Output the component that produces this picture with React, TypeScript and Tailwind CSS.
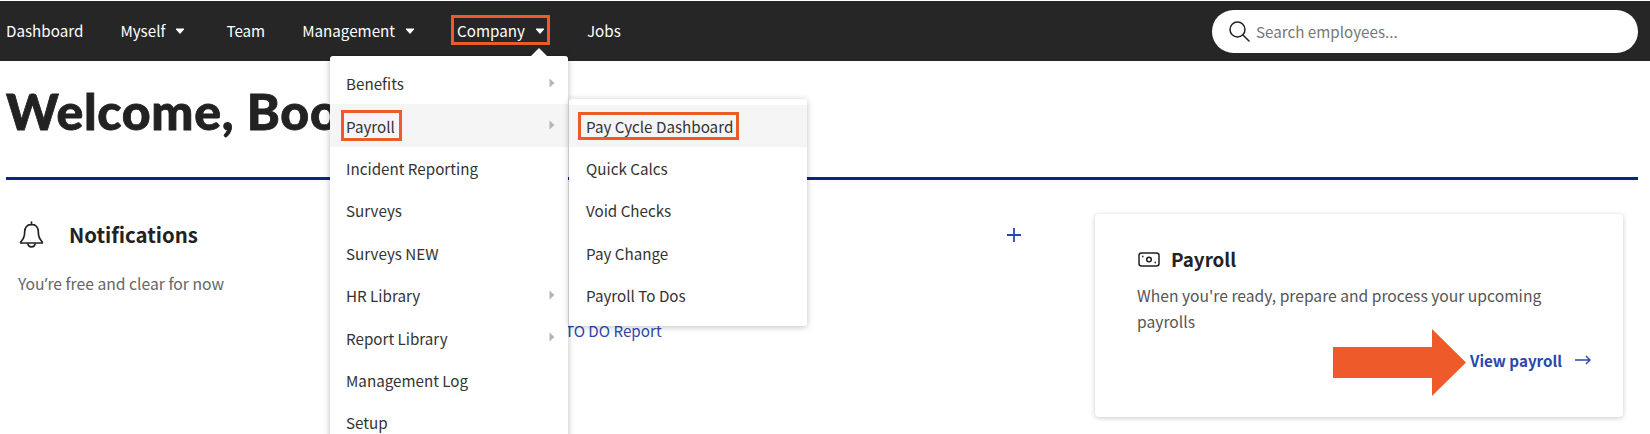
const menuItems = [
  { label: "Benefits", arrow: true },
  { label: "Payroll", arrow: true, active: true },
  { label: "Incident Reporting" },
  { label: "Surveys" },
  { label: "Surveys NEW" },
  { label: "HR Library", arrow: true },
  { label: "Report Library", arrow: true },
  { label: "Management Log" },
  { label: "Setup" },
];

const subItems = ["Pay Cycle Dashboard", "Quick Calcs", "Void Checks", "Pay Change", "Payroll To Dos"];

function Caret() {
  return (
    <svg width="10" height="6" viewBox="0 0 10 6" className="ml-[10px] mt-[1px]">
      <path d="M1 1h8L5 5.400z" fill="#fff" stroke="#fff" strokeWidth="1" strokeLinejoin="round" />
    </svg>
  );
}

function SideArrow() {
  return (
    <svg width="6" height="10" viewBox="0 0 6 10" className="absolute left-[219px] top-[16px]">
      <path d="M0.5 0.500L5.500 5L0.500 9.500z" fill="#b5b5b5" />
    </svg>
  );
}

function SearchIcon() {
  return (
    <svg width="22" height="22" viewBox="0 0 22 22" fill="none" stroke="#222" strokeWidth="1.500" strokeLinecap="round" className="mr-[6px]">
      <circle cx="9.500" cy="9.500" r="7.500" />
      <path d="M15 15l6 6" />
    </svg>
  );
}

function BellIcon() {
  return (
    <svg width="25" height="27" viewBox="0 0 25 27" fill="none" stroke="#222" strokeWidth="1.700" strokeLinejoin="round">
      <path d="M12.500 1v2.400" strokeLinecap="round" />
      <path d="M12.500 3.400c-4.400 0-6.800 3.200-6.800 7.400 0 5-1.200 7.600-4 10.200v1h21.600v-1c-2.800-2.600-4-5.200-4-10.200 0-4.200-2.400-7.400-6.800-7.400z" />
      <path d="M8.800 22.300c.3 2.200 1.800 3.500 3.700 3.500s3.400-1.300 3.700-3.500" />
    </svg>
  );
}

function MoneyIcon() {
  return (
    <svg width="22" height="15" viewBox="0 0 22 15" fill="none" stroke="#222" strokeWidth="1.500" strokeLinecap="round">
      <rect x="1" y="1" width="20" height="13" rx="2.500" />
      <circle cx="11" cy="7.500" r="2.300" />
      <path d="M4.800 4.200v.6M17.200 10.200v.6" />
    </svg>
  );
}

function LongArrow() {
  return (
    <svg width="16" height="10" viewBox="0 0 16 10" fill="none" stroke="#2a47ad" strokeWidth="1.400" className="ml-[13px]">
      <path d="M0 5h15M11 1l4 4-4 4" />
    </svg>
  );
}

function PlusIcon() {
  return (
    <svg width="14" height="14" viewBox="0 0 14 14" stroke="#2a47ad" strokeWidth="1.800" className="absolute left-[680px] top-[14px]">
      <path d="M7 0v14M0 7h14" />
    </svg>
  );
}

export default function App() {
  return (
    <div className="relative h-[434px] w-[1650px] overflow-hidden bg-white font-['Noto_Sans_CJK_SC','Noto_Sans',sans-serif] text-[15.200px] leading-[24px] text-[#333]">
      {/* top bar */}
      <header className="mt-[1px] flex h-[60px] items-center justify-between bg-[#262626] pl-[6px] pr-[12px] text-white">
        <nav className="flex items-center pb-[2px]">
          <a className="mr-[37px]">Dashboard</a>
          <a className="mr-[41px] flex items-center">Myself<Caret /></a>
          <a className="mr-[37px]">Team</a>
          <a className="mr-[36px] flex items-center">Management<Caret /></a>
          <a className="mr-[37px] flex h-[30px] items-center border-[3px] border-[#ee5a29] pl-[3px] pr-[2px]">Company<Caret /></a>
          <a>Jobs</a>
        </nav>
        <div className="flex h-[43px] w-[426px] items-center rounded-full bg-white pl-[16px] text-[#777]">
          <SearchIcon />
          <span>Search employees...</span>
        </div>
      </header>

      <main className="px-[6px] pr-[12px]">
        <h1 className="mt-[18px] h-[98px] font-['Lato'] text-[50px] font-black leading-[64px] tracking-[0.7px] text-[#222] [-webkit-text-stroke:0.800px_#222]">Welcome, Booker</h1>
        <div className="h-[3px] bg-[#06287e]" />

        <div className="mt-[34px] flex items-start">
          <section className="w-[321px] pl-[12px]">
            <div className="mt-[6px] flex items-center gap-[25px] pl-[1px]">
              <BellIcon />
              <h2 className="text-[20.400px] font-semibold leading-[28px] text-[#222]">Notifications</h2>
            </div>
            <p className="mt-[24px] text-[15.700px] text-[#666]">
              You<span className="font-['Noto_Sans']">’</span>re free and clear for now
            </p>
          </section>

          <section className="relative w-[768px] pl-[238px]">
            <p className="pt-[104px] text-[#2a47ad]">TO DO Report</p>
            <PlusIcon />
          </section>

          <section className="relative h-[203px] w-[528px] rounded-[4px] bg-white px-[42px] pt-[31px] shadow-[0_1px_5px_rgba(0,0,0,0.22)]">
            <div className="flex items-center gap-[11px] pl-[1px]">
              <MoneyIcon />
              <h2 className="text-[18.800px] font-semibold leading-[28px] text-[#222]">Payroll</h2>
            </div>
            <p className="mt-[10px] w-[430px] text-[15.650px] leading-[26px] text-[#555]">When you're ready, prepare and process your upcoming payrolls</p>
            <div className="absolute left-[375px] top-[134px] flex items-center font-semibold text-[#2a47ad]">
              View payroll
              <LongArrow />
            </div>
            {/* callout arrow */}
            <svg width="134" height="67" viewBox="0 0 134 67" className="absolute left-[238px] top-[115px]">
              <path d="M0 18H99V0L133 33.500L99 67V49H0z" fill="#ee5a29" />
            </svg>
          </section>
        </div>
      </main>

      {/* company menu */}
      <div className="absolute left-[330px] top-[56px] w-[238px] rounded-[3px] bg-white pt-[6px] shadow-[0_1px_6px_rgba(0,0,0,0.28)]">
        <div className="absolute left-[201px] top-[-8px] h-0 w-0 border-x-[8px] border-b-[8px] border-x-transparent border-b-white" />
        {menuItems.map((item) => (
          <div key={item.label} className={`relative flex h-[42.400px] items-center pl-[16px] ${item.active ? "bg-[#f5f5f5]" : ""}`}>
            {item.active ? (
              <span className="-ml-[5px] flex h-[31px] items-center border-[3px] border-[#ee5a29] pl-[2px] pr-[4px]">{item.label}</span>
            ) : (
              item.label
            )}
            {item.arrow && <SideArrow />}
          </div>
        ))}
      </div>

      {/* payroll submenu */}
      <div className="absolute left-[569px] top-[99px] h-[227px] w-[238px] rounded-[3px] bg-white pt-[5.500px] shadow-[0_1px_6px_rgba(0,0,0,0.25)]">
        {subItems.map((item, i) => (
          <div key={item} className={`flex h-[42.400px] items-center pl-[17px] ${i === 0 ? "bg-[#f5f5f5]" : ""}`}>
            {i === 0 ? (
              <span className="-ml-[8px] flex h-[28px] items-center border-[3px] border-[#ee5a29] pl-[5px] pr-[3px]">{item}</span>
            ) : (
              item
            )}
          </div>
        ))}
      </div>
    </div>
  );
}
